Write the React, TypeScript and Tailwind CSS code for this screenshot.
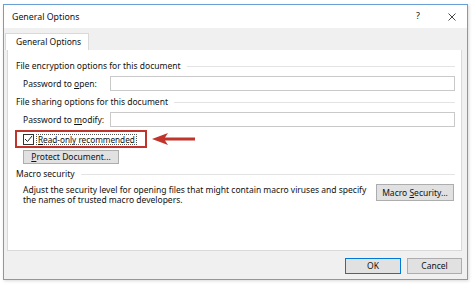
import React from 'react';

const font = { fontFamily: '"Noto Sans", "Open Sans", sans-serif' };

const SectionHeader = ({ title }: { title: string }) => (
  <div className="flex items-center h-[12px] pr-[6px]">
    <span className="whitespace-nowrap">{title}</span>
    <div className="flex-1 h-px bg-[#e3e3e3] ml-[6px]" />
  </div>
);

const PasswordRow = ({ before, accel, after }: { before: string; accel: string; after: string }) => (
  <div className="flex items-center h-[15px] pr-[6px]">
    <span className="w-[94px] shrink-0 pl-[7px] whitespace-nowrap">
      {before}
      <span className="underline">{accel}</span>
      {after}
    </span>
    <div className="flex-1 h-[15px] border border-[#c9c9c9] bg-white" />
  </div>
);

export default function App() {
  return (
    <div className="w-[474px] h-[286px] bg-white pl-[3px] pt-[4px] text-[8.5px] text-[#111] leading-[12px]" style={font}>
      <div className="w-[465px] h-[276px] border border-[#6b9fd6] bg-[#f0f0f0] flex flex-col shadow-[1px_1px_3px_rgba(0,0,0,0.15)]">
        {/* title bar */}
        <div className="h-[23px] bg-white flex items-center pl-[8px] pr-[11px] shrink-0">
          <span className="flex-1 text-[8.8px]">General Options</span>
          <span className="text-[9px] mr-[28px] mt-[-1px]">?</span>
          <svg width="8" height="8" viewBox="0 0 8 8">
            <path d="M0.5 0.5 L7.5 7.5 M7.5 0.5 L0.5 7.5" stroke="#333" strokeWidth="0.9" />
          </svg>
        </div>

        {/* body */}
        <div className="flex-1 flex flex-col pl-[1px] pr-[5px] pt-[5px]">
          <div className="flex">
            <div className="w-[84px] h-[17px] bg-white border border-b-0 border-[#d9d9d9] pl-[10px] flex items-center">
              General Options
            </div>
          </div>
          <div className="ml-[2px] h-[201px] bg-white border border-t-0 border-[#d9d9d9] pl-[8px] flex flex-col">
            <div className="mt-[10px]">
              <SectionHeader title="File encryption options for this document" />
            </div>
            <div className="mt-[4px]">
              <PasswordRow before="Password to " accel="o" after="pen:" />
            </div>
            <div className="mt-[5px]">
              <SectionHeader title="File sharing options for this document" />
            </div>
            <div className="mt-[4px]">
              <PasswordRow before="Password to " accel="m" after="odify:" />
            </div>

            <div className="mt-[3px] flex items-center">
              <div className="-ml-px w-[132px] h-[18px] border-2 border-[#c0342c] flex items-center pl-[6px]">
                <div className="w-[11px] h-[11px] shrink-0 border border-[#333] bg-white flex items-center justify-center">
                  <svg width="9" height="8" viewBox="0 0 9 8">
                    <path d="M1 4 L3.5 6.5 L8 1" stroke="#222" strokeWidth="1" fill="none" />
                  </svg>
                </div>
                <span className="ml-[2px] px-px border border-dotted border-[#555] leading-[9px] text-[8.2px] whitespace-nowrap">
                  <span className="underline">R</span>ead-only recommended
                </span>
              </div>
              <svg width="43" height="12" viewBox="0 0 43 12" className="ml-[5px]">
                <path d="M0 6 L16 0 L13 4.6 L43 4.6 L43 7.4 L13 7.4 L16 12 Z" fill="#c0342c" />
              </svg>
            </div>

            <div className="mt-[2px] ml-[7px]">
              <div className="w-[96px] h-[14px] bg-[#e1e1e1] border border-[#adadad] flex items-center justify-center">
                <span>
                  <span className="underline">P</span>rotect Document...
                </span>
              </div>
            </div>

            <div className="mt-[4px]">
              <SectionHeader title="Macro security" />
            </div>

            <div className="mt-[4px] flex items-start pl-[7px] pr-[7px]">
              <p className="flex-1 leading-[10px] mt-[1px]">
                Adjust the security level for opening files that might contain macro viruses and specify
                <br />
                the names of trusted macro developers.
              </p>
              <div className="w-[78px] h-[17px] shrink-0 bg-[#e1e1e1] border border-[#adadad] flex items-center justify-center">
                <span>
                  Macro <span className="underline">S</span>ecurity...
                </span>
              </div>
            </div>
          </div>

          {/* footer */}
          <div className="flex justify-end pt-[7px] gap-[6px]">
            <div className="w-[56px] h-[16px] bg-[#e1e1e1] border border-[#0078d7] flex items-center justify-center">OK</div>
            <div className="w-[55px] h-[16px] bg-[#e1e1e1] border border-[#adadad] flex items-center justify-center">Cancel</div>
          </div>
        </div>
      </div>
    </div>
  );
}
